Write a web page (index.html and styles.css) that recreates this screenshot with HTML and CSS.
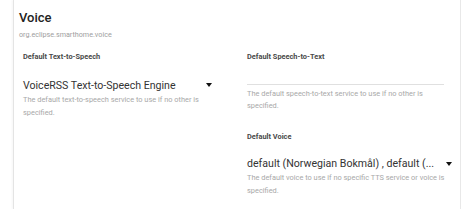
FILE: index.html
```html
<!DOCTYPE html>
<html lang="en">
<head>
  <meta charset="UTF-8">
  <title>Voice</title>
  <link rel="stylesheet" href="styles.css">
</head>
<body>
  <div class="card">
    <h1 class="title">Voice</h1>
    <div class="subtitle">org.eclipse.smarthome.voice</div>

    <div class="params">
      <div class="column">
        <div class="param">
          <div class="label">Default Text-to-Speech</div>
          <div class="select">
            <span class="value">VoiceRSS Text-to-Speech Engine</span>
            <span class="arrow"></span>
          </div>
          <p class="desc">The default text-to-speech service to use if no other is specified.</p>
        </div>
      </div>

      <div class="column">
        <div class="param">
          <div class="label">Default Speech-to-Text</div>
          <div class="input"></div>
          <p class="desc">The default speech-to-text service to use if no other is specified.</p>
        </div>

        <div class="param voice">
          <div class="label">Default Voice</div>
          <div class="select wide">
            <span class="value">default (Norwegian Bokmål) , default (...</span>
            <span class="arrow"></span>
          </div>
          <p class="desc">The default voice to use if no specific TTS service or voice is specified.</p>
        </div>
      </div>
    </div>
  </div>
</body>
</html>
```

FILE: styles.css
```css
* {
  box-sizing: border-box;
}

body {
  margin: 0;
  background-color: #fff;
  font-family: Roboto, "Liberation Sans", sans-serif;
  color: #333;
}

.card {
  margin-left: 13px;
  width: 448px;
  height: 209px;
  padding: 9px 0 0 5px;
  border-left: 1px solid #e4e4e4;
  border-right: 1px solid #e8e8e8;
  box-shadow: -1px 0 2px rgba(0, 0, 0, 0.04);
}

.title {
  margin: 0;
  font-size: 13px;
  font-weight: 500;
  color: #222;
  line-height: 18px;
}

.subtitle {
  margin-top: 3px;
  font-size: 7.2px;
  line-height: 10px;
  color: #9e9e9e;
}

.params {
  display: flex;
  padding-left: 4px;
  margin-top: 12px;
}

.column {
  flex: 1;
}

.column:first-child {
  flex: 0 0 224px;
}

.label {
  font-size: 7.4px;
  font-weight: 700;
  color: #4a4a4a;
  line-height: 10px;
}

.select {
  display: flex;
  align-items: center;
  margin-top: 15px;
  height: 16px;
  width: 189px;
}

.select.wide {
  width: 205px;
  margin-top: 14px;
}

.value {
  flex: 1;
  font-size: 10.6px;
  color: #333;
  white-space: nowrap;
}

.arrow {
  width: 0;
  height: 0;
  margin-left: 9px;
  border-left: 3.5px solid transparent;
  border-right: 3.5px solid transparent;
  border-top: 4px solid #111;
}

.input {
  width: 197px;
  height: 23px;
  border-bottom: 1px solid #e0e0e0;
}

.desc {
  margin: 0;
  width: 200px;
  font-size: 7.4px;
  line-height: 13px;
  color: #a8a8a8;
}

.input + .desc {
  margin-top: 2.5px;
  line-height: 12.5px;
}

.voice {
  margin-top: 19px;
}

.voice .desc {
  margin-top: -1px;
}
```
